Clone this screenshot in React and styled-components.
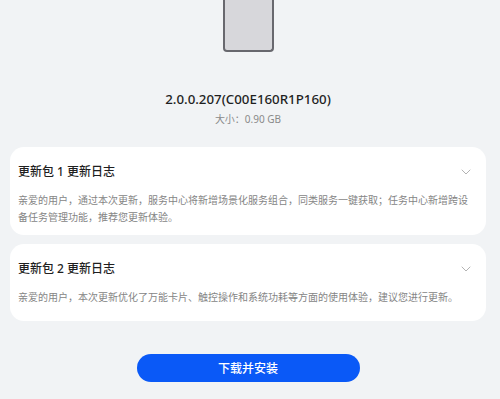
import React from "react";
import styled, { createGlobalStyle } from "styled-components";

const Global = createGlobalStyle`
  html, body { margin: 0; padding: 0; background: #f1f3f5; }
  body { font-family: "Noto Sans", "Noto Sans CJK SC", sans-serif; -webkit-font-smoothing: antialiased; }
`;

const Page = styled.div`
  width: 500px;
  height: 399px;
  box-sizing: border-box;
  padding: 0 14px 0 10px;
  display: flex;
  flex-direction: column;
  align-items: center;
  overflow: hidden;
`;

const Phone = styled.div`
  width: 47px;
  height: 50px;
  background: #d7d7db;
  border: 2px solid #68686e;
  border-top: none;
  border-radius: 0 0 4px 4px;
  margin-left: 1px;
`;

const Version = styled.div`
  margin-top: 37px;
  font-size: 13.3px;
  font-weight: 500;
  color: #1f1f1f;
  line-height: 20px;
`;

const Size = styled.div`
  margin-top: 3px;
  font-size: 10px;
  color: #8a8a8a;
  line-height: 14px;
`;

const Cards = styled.div`
  align-self: stretch;
  margin-top: 21px;
  display: flex;
  flex-direction: column;
  gap: 9px;
`;

const Card = styled.div`
  background: #ffffff;
  border-radius: 14px;
  padding: 17px 12px ${(p) => p.$pb}px 8px;
`;

const Header = styled.div`
  display: flex;
  align-items: center;
  justify-content: space-between;
  height: 16px;
`;

const Title = styled.div`
  font-size: 12px;
  font-weight: 500;
  color: #1f1f1f;
  line-height: 16px;
`;

const Chevron = styled.svg`
  width: 10px;
  height: 6px;
  margin-right: 3px;
`;

const Body = styled.div`
  margin-top: 12px;
  font-size: 10px;
  line-height: 17px;
  color: #858585;
`;

const Button = styled.button`
  margin-top: 33px;
  width: 223px;
  height: 28px;
  border: none;
  border-radius: 14px;
  background: #0a59f7;
  color: #ffffff;
  font-family: inherit;
  font-size: 12px;
  font-weight: 500;
  display: flex;
  align-items: center;
  justify-content: center;
  padding: 0;
`;

const Arrow = () => (
  <Chevron viewBox="0 0 10 6">
    <path d="M1 1 L5 5 L9 1" fill="none" stroke="#b3b3b3" strokeWidth="1" strokeLinecap="round" strokeLinejoin="round" />
  </Chevron>
);

const logs = [
  {
    title: "更新包 1 更新日志",
    body: "亲爱的用户，通过本次更新，服务中心将新增场景化服务组合，同类服务一键获取；任务中心新增跨设备任务管理功能，推荐您更新体验。",
    pb: 9,
  },
  {
    title: "更新包 2 更新日志",
    body: "亲爱的用户，本次更新优化了万能卡片、触控操作和系统功耗等方面的使用体验，建议您进行更新。",
    pb: 15,
  },
];

export default function App() {
  return (
    <>
      <Global />
      <Page>
        <Phone />
        <Version>2.0.0.207(C00E160R1P160)</Version>
        <Size>大小：0.90 GB</Size>
        <Cards>
          {logs.map((l) => (
            <Card key={l.title} $pb={l.pb}>
              <Header>
                <Title>{l.title}</Title>
                <Arrow />
              </Header>
              <Body>{l.body}</Body>
            </Card>
          ))}
        </Cards>
        <Button>下载并安装</Button>
      </Page>
    </>
  );
}
